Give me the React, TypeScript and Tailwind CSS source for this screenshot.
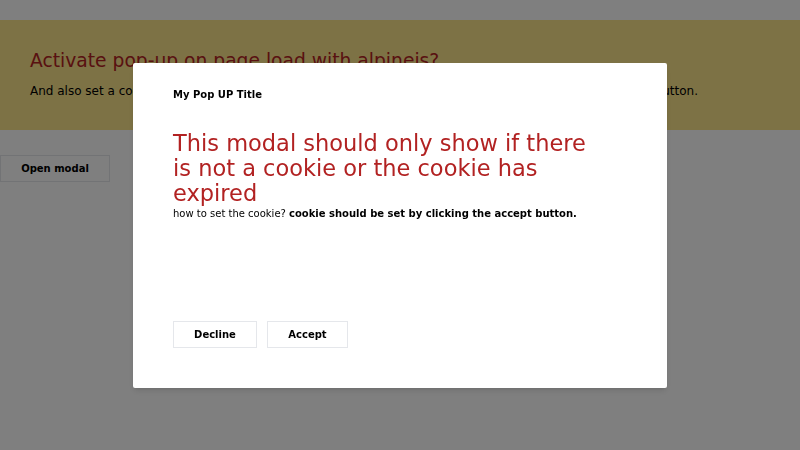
export default function App() {
  return (
    <div className="relative min-h-[450px] w-full bg-white font-['DejaVu_Sans',sans-serif] text-black">
      {/* Page */}
      <section className="mt-[20px] bg-[#fae48a] pb-[29px] pl-[30px] pt-[27px]">
        <h1 className="text-[18.7px] leading-[28px] text-[#b22222]">
          Activate pop-up on page load with alpinejs?
        </h1>
        <p className="mt-[6px] text-[12px] leading-[20px]">
          And also set a cookie so the pop-up is not shown again, the cookie should be set by clicking the accept button.
        </p>
      </section>

      <button className="mt-[25px] h-[27px] w-[110px] border border-gray-200 text-[10px] font-bold">
        Open modal
      </button>

      {/* Modal */}
      <div className="fixed inset-0 flex items-center justify-center bg-black/50">
        <div className="flex h-[325px] w-[534px] flex-col rounded-[2px] bg-white px-10 pb-10 pt-[24px] shadow-md">
          <h2 className="text-[10px] font-bold leading-[16px]">My Pop UP Title</h2>
          <p className="mt-[28px] w-[425px] text-[22.5px] leading-[25px] text-[#b22222]">
            This modal should only show if there is not a cookie or the cookie has expired
          </p>
          <p className="text-[10px] leading-[15px]">
            how to set the cookie? <b>cookie should be set by clicking the accept button.</b>
          </p>
          <div className="mt-auto flex gap-[10px]">
            <button className="h-[27px] w-[84px] border border-gray-200 text-[10px] font-bold">
              Decline
            </button>
            <button className="h-[27px] w-[81px] border border-gray-200 text-[10px] font-bold">
              Accept
            </button>
          </div>
        </div>
      </div>
    </div>
  );
}
